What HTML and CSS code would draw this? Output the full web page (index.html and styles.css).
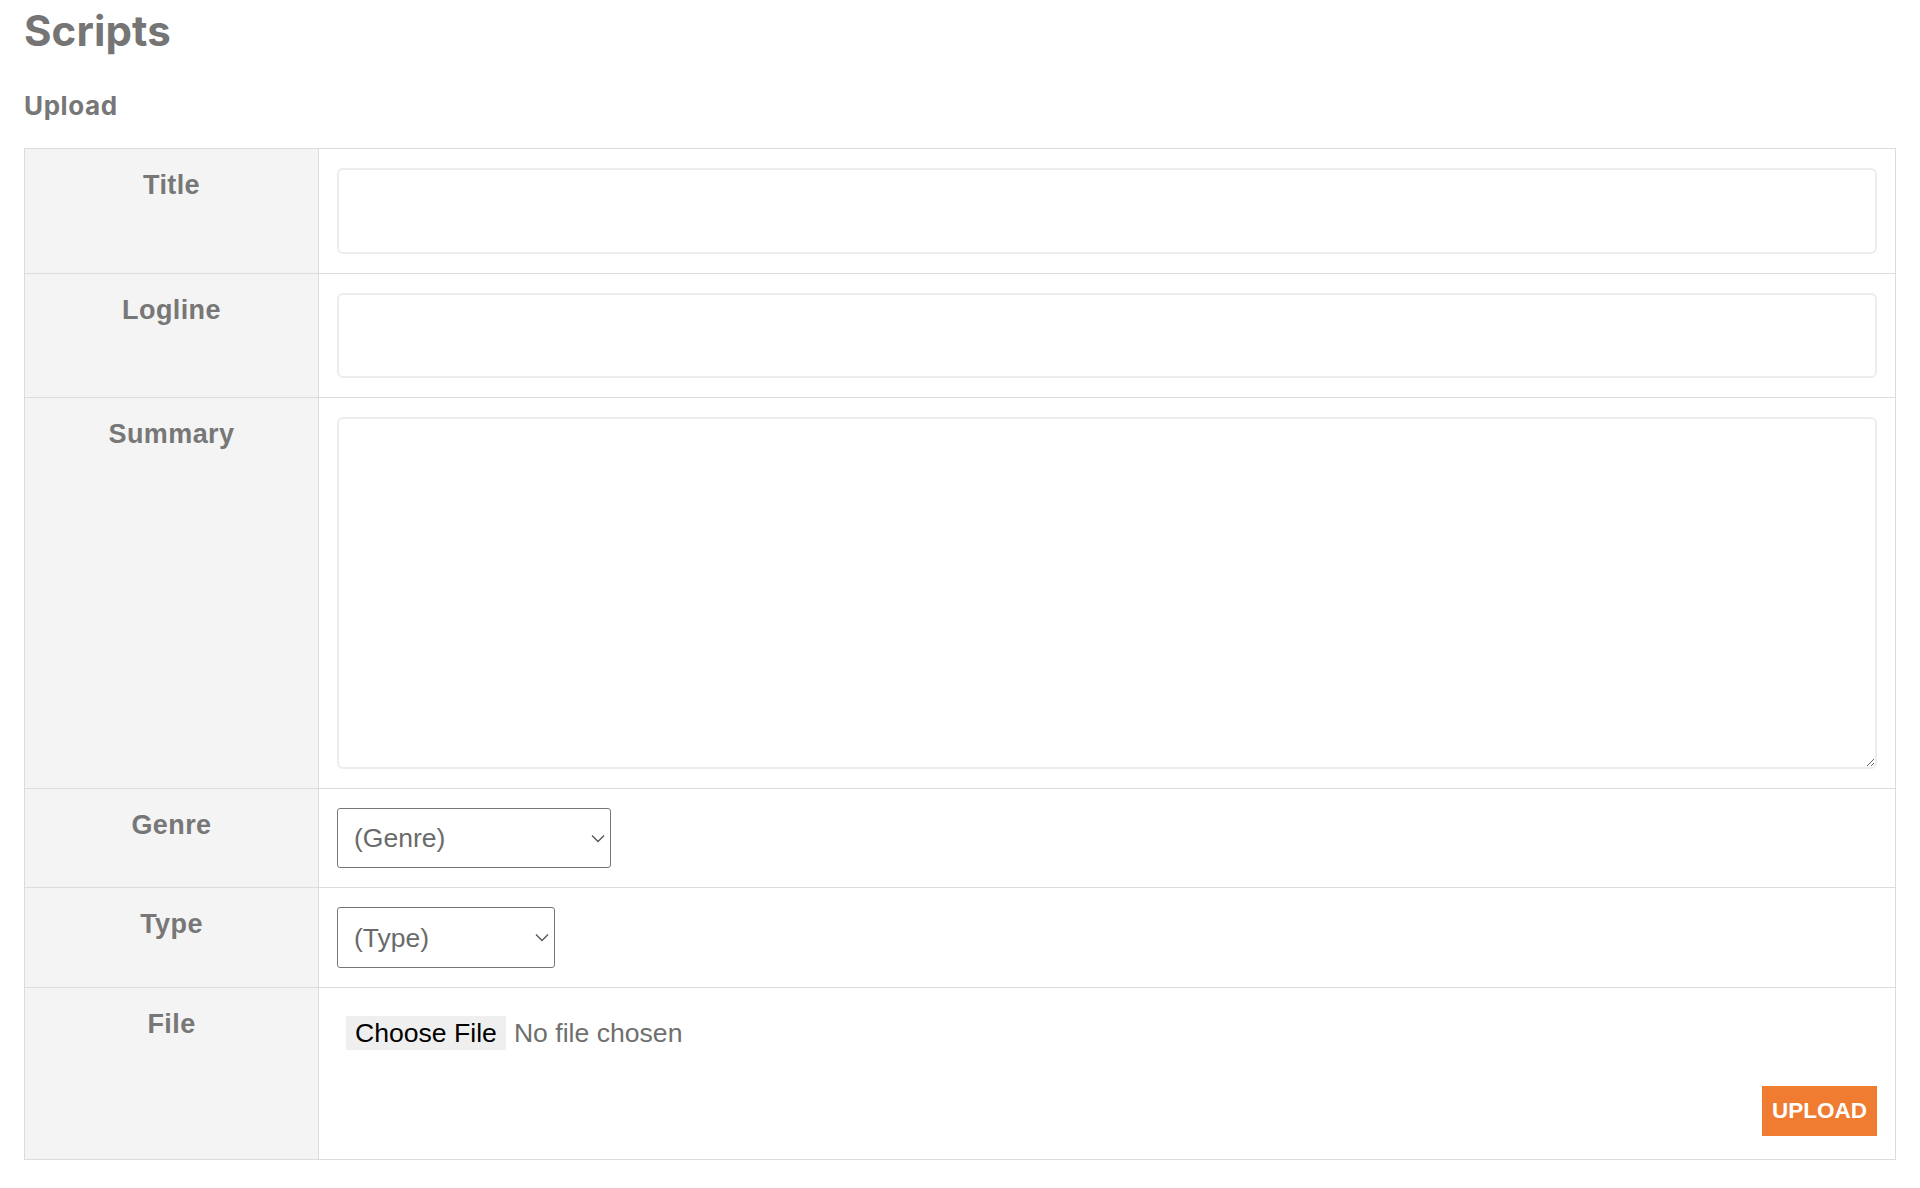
FILE: index.html
```html
<!DOCTYPE html>
<html lang="en">
<head>
<meta charset="utf-8">
<title>Scripts - Upload</title>
<link rel="stylesheet" href="styles.css">
</head>
<body>
<main class="page">
  <h1 class="page-title">Scripts</h1>
  <h2 class="section-title">Upload</h2>
  <form class="form-grid">
    <div class="label-cell">Title</div>
    <div class="field-cell"><input class="text-input" type="text"></div>

    <div class="label-cell">Logline</div>
    <div class="field-cell"><input class="text-input short" type="text"></div>

    <div class="label-cell">Summary</div>
    <div class="field-cell"><textarea class="text-area"></textarea></div>

    <div class="label-cell">Genre</div>
    <div class="field-cell">
      <div class="select-wrap select-genre">
        <select class="select"><option>(Genre)</option></select>
        <svg class="chevron" viewBox="0 0 14 9" width="14" height="9"><path d="M1 1.5 L7 7.5 L13 1.5" fill="none" stroke="#555" stroke-width="1.3"/></svg>
      </div>
    </div>

    <div class="label-cell">Type</div>
    <div class="field-cell">
      <div class="select-wrap select-type">
        <select class="select"><option>(Type)</option></select>
        <svg class="chevron" viewBox="0 0 14 9" width="14" height="9"><path d="M1 1.5 L7 7.5 L13 1.5" fill="none" stroke="#555" stroke-width="1.3"/></svg>
      </div>
    </div>

    <div class="label-cell last">File</div>
    <div class="field-cell file-cell last">
      <div class="file-line">
        <span class="file-button">Choose File</span>
        <span class="file-status">No file chosen</span>
      </div>
      <div class="actions">
        <button type="button" class="upload-btn">UPLOAD</button>
      </div>
    </div>
  </form>
</main>
</body>
</html>
```

FILE: styles.css
```css
* { box-sizing: border-box; }

html, body {
  margin: 0;
  padding: 0;
  background: #ffffff;
}

.page {
  padding: 0 24px;
  display: flex;
  flex-direction: column;
}

.page-title {
  margin: 5px 0 0 0;
  font-family: Inter, "Open Sans", sans-serif;
  font-weight: 700;
  font-size: 42px;
  line-height: 51px;
  color: #757575;
  letter-spacing: 0.1px;
}

.section-title {
  margin: 34px 0 0 0;
  font-family: Inter, "Open Sans", sans-serif;
  font-weight: 700;
  font-size: 26px;
  line-height: 31px;
  color: #777777;
  letter-spacing: 0.6px;
}

.form-grid {
  margin-top: 27px;
  display: grid;
  grid-template-columns: 294px 1fr;
  border: 1px solid #dcdcdc;
}

.label-cell {
  background: #f4f4f4;
  border-right: 1px solid #dcdcdc;
  border-bottom: 1px solid #dcdcdc;
  padding-top: 21px;
  text-align: center;
  font-family: "Liberation Sans", Arial, sans-serif;
  font-weight: 700;
  font-size: 27px;
  line-height: 31px;
  letter-spacing: 0.4px;
  color: #777777;
}

.field-cell {
  border-bottom: 1px solid #dcdcdc;
  padding: 19px 18px;
  display: flex;
  flex-direction: column;
}

.last { border-bottom: none; }

.text-input {
  height: 86px;
  border: 2px solid #ececec;
  border-radius: 6px;
  background: #ffffff;
  font-family: "Liberation Sans", Arial, sans-serif;
  font-size: 26px;
  padding: 0 16px;
  outline: none;
}

.text-input.short { height: 85px; }

.text-area {
  height: 352px;
  border: 2px solid #ececec;
  border-radius: 6px;
  background: #ffffff;
  font-family: "Liberation Sans", Arial, sans-serif;
  font-size: 26px;
  padding: 12px 16px;
  resize: vertical;
  outline: none;
}

.select-wrap {
  position: relative;
  height: 60px;
}

.select-genre { width: 274px; }
.select-type { width: 218px; height: 61px; }

.select {
  appearance: none;
  -webkit-appearance: none;
  width: 100%;
  height: 100%;
  border: 1px solid #767676;
  border-radius: 3px;
  background: #ffffff;
  padding: 0 30px 0 16px;
  font-family: "Liberation Sans", Arial, sans-serif;
  font-size: 26.5px;
  color: #6a6a6a;
  outline: none;
}

.chevron {
  position: absolute;
  right: 6px;
  top: 26px;
  pointer-events: none;
}

.file-cell {
  padding-bottom: 23px;
}

.file-line {
  margin-top: 9px;
  margin-left: 9px;
  display: flex;
  align-items: center;
  gap: 8px;
  font-family: "Liberation Sans", Arial, sans-serif;
  font-size: 26.6px;
}

.file-button {
  background: #efefef;
  color: #000000;
  height: 34px;
  line-height: 34px;
  padding: 0 9px;
}

.file-status {
  color: #6f6f6f;
}

.actions {
  margin-top: 36px;
  display: flex;
  justify-content: flex-end;
}

.upload-btn {
  width: 115px;
  height: 50px;
  border: none;
  border-radius: 0;
  background: #ef7c30;
  color: #ffffff;
  font-family: "Liberation Sans", Arial, sans-serif;
  font-weight: 700;
  font-size: 22.5px;
  padding: 0;
}
```
